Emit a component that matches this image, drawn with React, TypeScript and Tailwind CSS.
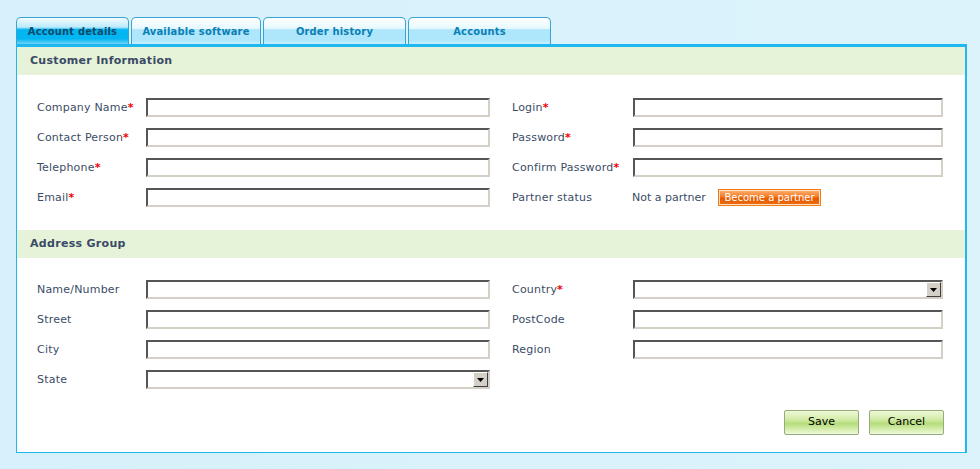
import React from "react";

const font = { fontFamily: '"DejaVu Sans", Verdana, sans-serif' };

const tabs = [
  { name: "Account details", w: "w-[113px]", active: true },
  { name: "Available software", w: "w-[130px]" },
  { name: "Order history", w: "w-[143px]" },
  { name: "Accounts", w: "w-[143px]" },
];

function Label({ text, req }: { text: string; req?: boolean }) {
  return (
    <span className="text-[11px] leading-[19px] text-[#3b4c66] tracking-[0.2px]">
      {text}
      {req && <span className="text-[#f00000] font-bold">*</span>}
    </span>
  );
}

function TextInput({ w }: { w: string }) {
  return (
    <div
      className={`${w} h-[19px] bg-white border-2 border-t-[#555] border-l-[#555] border-r-[#d4d0c8] border-b-[#d4d0c8]`}
    />
  );
}

function SelectInput({ w }: { w: string }) {
  return (
    <div
      className={`${w} h-[19px] bg-white border-2 border-t-[#555] border-l-[#555] border-r-[#d4d0c8] border-b-[#d4d0c8] flex justify-end items-center`}
    >
      <div className="w-[15px] h-[15px] bg-[#d4d0c8] border border-t-white border-l-white border-r-[#404040] border-b-[#404040] flex items-center justify-center">
        <svg width="7" height="4" viewBox="0 0 7 4">
          <path d="M0 0h7L3.5 4z" fill="#000" />
        </svg>
      </div>
    </div>
  );
}

function Row({
  left,
  right,
}: {
  left: React.ReactNode;
  right?: React.ReactNode;
}) {
  return (
    <div className="flex h-[19px] items-center text-[11px] leading-[19px]">
      <div className="flex items-center">{left}</div>
      <div className="flex items-center ml-[22px]">{right}</div>
    </div>
  );
}

function LeftField({
  label,
  req,
  select,
}: {
  label: string;
  req?: boolean;
  select?: boolean;
}) {
  return (
    <>
      <div className="w-[109px] flex items-center">
        <Label text={label} req={req} />
      </div>
      {select ? <SelectInput w="w-[344px]" /> : <TextInput w="w-[344px]" />}
    </>
  );
}

function RightField({
  label,
  req,
  select,
}: {
  label: string;
  req?: boolean;
  select?: boolean;
}) {
  return (
    <>
      <div className="w-[121px] flex items-center">
        <Label text={label} req={req} />
      </div>
      {select ? <SelectInput w="w-[310px]" /> : <TextInput w="w-[310px]" />}
    </>
  );
}

function SectionHeader({ title }: { title: string }) {
  return (
    <div className="h-[28px] bg-[#e6f3d8] flex items-center pl-[13px]">
      <span className="text-[11px] font-bold text-[#3a4a66] tracking-[0.3px]">
        {title}
      </span>
    </div>
  );
}

function GreenButton({ text }: { text: string }) {
  return (
    <button className="w-[75px] h-[25px] border border-[#95ad7c] rounded-[2px] bg-[linear-gradient(#eef8d8_0%,#d4ecaa_35%,#b6dc7c_55%,#d6eeae_80%,#eef8dc_100%)] text-[11px] text-black flex items-center justify-center">
      {text}
    </button>
  );
}

export default function App() {
  return (
    <div
      className="w-[980px] h-[469px] bg-[linear-gradient(90deg,#d6f1fb,#dcf3fb)] pt-[17px] pl-[16px]"
      style={font}
    >
      <div className="flex gap-[2px] h-[27px]">
        {tabs.map((t) => (
          <div
            key={t.name}
            className={`${t.w} h-[27px] pt-[2px] rounded-t-[5px] border border-b-0 border-[#3aa3cf] flex items-center justify-center text-[11px] font-bold font-['DejaVu_Sans_Condensed',sans-serif] tracking-[0.2px] ${
              t.active
                ? "bg-[linear-gradient(#f4fcff_0%,#bdeafb_35%,#03b6f2_45%,#03b6f2_80%,#6fd2f6_100%)] text-[#0b4a6b]"
                : "bg-[linear-gradient(#ffffff_0%,#e6f8fe_40%,#aee6fb_45%,#aee6fb_85%,#c9effc_100%)] text-[#0a7fb5]"
            }`}
          >
            {t.name}
          </div>
        ))}
      </div>
      <div className="w-[951px] h-[409px] bg-white border-t-[3px] border-x border-r-2 border-b border-[#1fb7ef] flex flex-col">
        <SectionHeader title="Customer Information" />
        <div className="pl-[20px] pt-[23px] flex flex-col gap-[11px]">
          <Row
            left={<LeftField label="Company Name" req />}
            right={<RightField label="Login" req />}
          />
          <Row
            left={<LeftField label="Contact Person" req />}
            right={<RightField label="Password" req />}
          />
          <Row
            left={<LeftField label="Telephone" req />}
            right={<RightField label="Confirm Password" req />}
          />
          <Row
            left={<LeftField label="Email" req />}
            right={
              <>
                <div className="w-[120px] flex items-center">
                  <Label text="Partner status" />
                </div>
                <span className="text-[11px] leading-[19px] text-[#3b4c66] w-[86px]">
                  Not a partner
                </span>
                <button className="w-[103px] h-[17px] border border-[#f47a14] bg-[linear-gradient(#fbb47a_0%,#f57a22_45%,#e35a00_55%,#ee6d10_100%)] text-white text-[10px] flex items-center justify-center outline outline-1 outline-[#fde0c8] -outline-offset-2">
                  Become a partner
                </button>
              </>
            }
          />
        </div>
        <div className="mt-[23px]">
          <SectionHeader title="Address Group" />
        </div>
        <div className="pl-[20px] pt-[22px] flex flex-col gap-[11px]">
          <Row
            left={<LeftField label="Name/Number" />}
            right={<RightField label="Country" req select />}
          />
          <Row
            left={<LeftField label="Street" />}
            right={<RightField label="PostCode" />}
          />
          <Row
            left={<LeftField label="City" />}
            right={<RightField label="Region" />}
          />
          <Row left={<LeftField label="State" select />} />
        </div>
        <div className="flex justify-end gap-[10px] pr-[21px] mt-[21px]">
          <GreenButton text="Save" />
          <GreenButton text="Cancel" />
        </div>
      </div>
    </div>
  );
}
